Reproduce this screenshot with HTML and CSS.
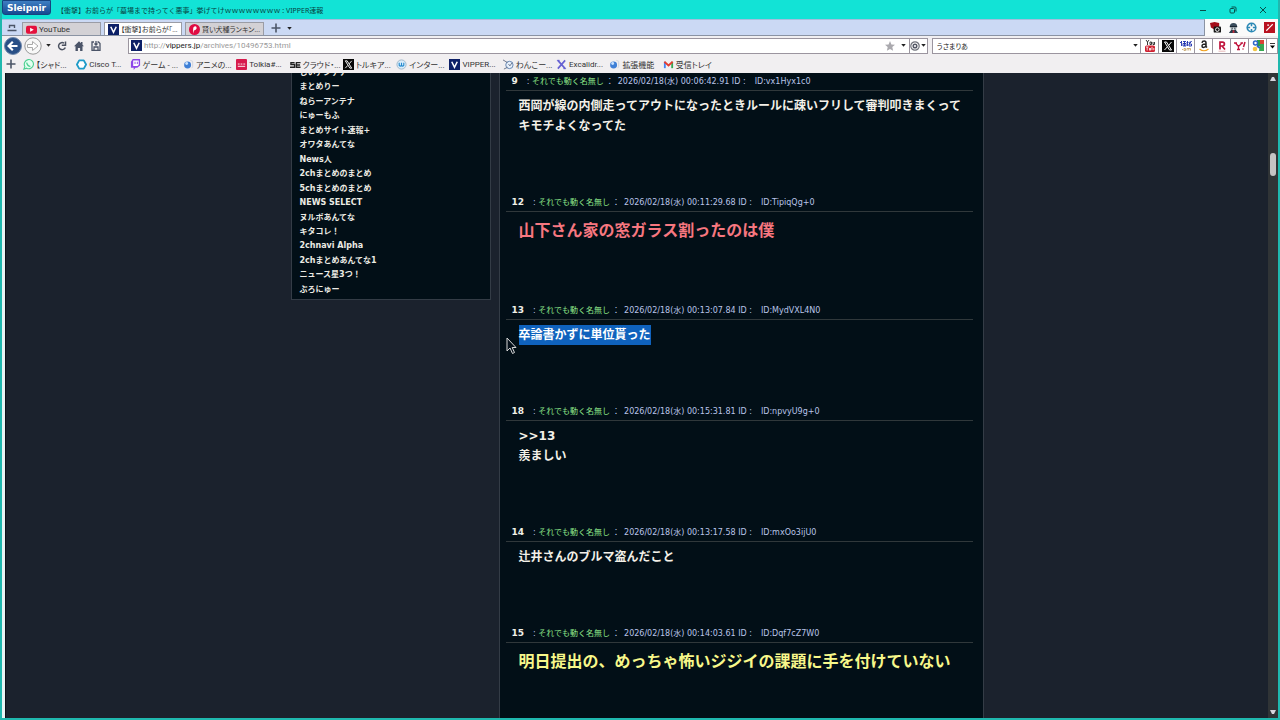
FILE: index.html
```html
<!DOCTYPE html>
<html lang="ja">
<head>
<meta charset="utf-8">
<title>VIPPER速報</title>
<link rel="stylesheet" href="styles.css">
</head>
<body>
<svg width="0" height="0" class="defs" aria-hidden="true">
  <symbol id="v" viewBox="0 0 12 12"><rect width="12" height="12" fill="#0d2067"/><path d="M3 3l3 6 3-6" fill="none" stroke="#fff" stroke-width="1.7"/></symbol>
  <symbol id="x" viewBox="0 0 12 12"><rect width="12" height="12" fill="#080808"/><path d="M2.500 2h2l5 8h-2zM9.500 2L6.800 5.200M5.200 7L2.500 10" fill="none" stroke="#fff" stroke-width="1"/></symbol>
  <symbol id="down" viewBox="0 0 6 4"><path d="M0 0h6L3 3.6z" fill="currentColor"/></symbol>
  <symbol id="globe" viewBox="0 0 12 12"><circle cx="5" cy="6.5" r="3.8" fill="#3f7fd6"/><circle cx="4" cy="5" r="1.6" fill="#c7e2ff"/><path d="M8 1.500l2.500 1v6l-1 1.500" fill="none" stroke="#cfd2da"/></symbol>
  <symbol id="plus" viewBox="0 0 10 10"><path d="M5 .5v9M.5 5h9" stroke="#4b5567" stroke-width="1.600"/></symbol>
</svg>
<div class="window">
  <header class="titlebar">
    <button class="brand">Sleipnir</button>
    <span class="title">【衝撃】お前らが「墓場まで持ってく悪事」挙げてけｗｗｗｗｗｗｗｗ : VIPPER速報</span>
    <div class="winbtns">
      <button aria-label="最小化"><svg viewBox="0 0 8 8"><path d="M1 4.500h6" stroke="#064f4b"/></svg></button>
      <button aria-label="元に戻す"><svg viewBox="0 0 8 8" fill="none" stroke="#064f4b"><rect x="1" y="2.500" width="4.500" height="4.500" rx="1"/><path d="M2.500 1h3.500q1 0 1 1v3.500"/></svg></button>
      <button aria-label="閉じる"><svg viewBox="0 0 8 8"><path d="M1 1l6 6M7 1L1 7" stroke="#064f4b"/></svg></button>
    </div>
  </header>

  <div class="tabrow">
    <div class="tabs">
      <button class="tabmenu" aria-label="タブ一覧"><svg viewBox="0 0 10 10"><path d="M2.500 5V2.500h5V5M.5 7.500h9" fill="none" stroke="#4b5567" stroke-width="1.400"/></svg></button>
      <button class="tab latin"><svg class="ic" viewBox="0 0 12 12"><rect y="2" width="12" height="8.500" rx="2" fill="#e5103c"/><path d="M4.500 4l4 2.200-4 2.300z" fill="#fff"/></svg>YouTube</button>
      <button class="tab active"><svg class="ic"><use href="#v"/></svg>【衝撃】お前らが「...</button>
      <button class="tab"><svg class="ic" viewBox="0 0 12 12"><circle cx="6" cy="6" r="6" fill="#e00b43"/><path d="M4.500 10.500V6C4.500 3.500 5.500 2.500 7 2.500s2.500 4-1.500 4.500z" fill="#fff"/></svg>賢い犬種ランキン...</button>
      <button class="newtab" aria-label="新しいタブ"><svg viewBox="0 0 10 10"><use href="#plus"/></svg></button>
      <button class="tabarrow" aria-label="タブメニュー"><svg><use href="#down"/></svg></button>
    </div>
    <div class="addons">
      <button aria-label="キャプチャ"><svg viewBox="0 0 12 12"><path d="M0 1l5-1 5 1v4L6 9 1 6z" fill="#a50d1a"/><rect x="4" y="5" width="8" height="6.500" rx="1" fill="#161616"/><circle cx="8" cy="8.300" r="2" fill="none" stroke="#fff"/></svg></button>
      <button aria-label="ユーザー"><svg viewBox="0 0 12 12"><path d="M2 5q0-4 4-4t4 4z" fill="#3a4c5c"/><rect x="2.500" y="4.500" width="7" height="4" fill="#cfd8dc"/><path d="M2 5h8M4 7h1M7 7h1" stroke="#182532" stroke-width="1.500"/><path d="M1 12l3-4 2 1 2-1 3 4z" fill="#263b4c"/><path d="M5 9h2v3H5z" fill="#b92a3a"/></svg></button>
      <button aria-label="ツール"><svg viewBox="0 0 12 12" fill="none" stroke="#2b88b5" stroke-width="1.700"><circle cx="6" cy="6" r="4.700"/><path d="M6 1v3.500M6 7.500V11M1 6h3.500M7.500 6H11"/></svg></button>
      <button aria-label="ハイライト"><svg viewBox="0 0 12 12"><rect width="12" height="12" fill="#b81120"/><path d="M2.500 9.500L9.500 2.500M3.500 3.500h2" stroke="#fff" stroke-width="1.300"/></svg></button>
    </div>
  </div>

  <div class="navrow">
    <div class="nav">
      <button class="back" aria-label="戻る"><svg viewBox="0 0 18 18"><circle cx="9" cy="9" r="8.500" fill="#294f86" stroke="#7189ac"/><path d="M13.500 9H5M8.800 4.800L4.600 9l4.200 4.200" fill="none" stroke="#fff" stroke-width="2.200"/></svg></button>
      <button class="back" aria-label="進む"><svg viewBox="0 0 18 18"><circle cx="9" cy="9" r="8.200" fill="#f8f8f8" stroke="#999"/><path d="M3.500 7.500h5V4.500L14 9l-5.500 4.500v-3h-5z" fill="#fff" stroke="#aaa"/></svg></button>
      <button class="small" aria-label="履歴"><svg><use href="#down"/></svg></button>
      <button aria-label="更新"><svg viewBox="0 0 10 10"><path d="M8.300 6.500A3.500 3.500 0 1 1 7 2.200M4.800 4.200h3.700V.5" fill="none" stroke="#4b5160" stroke-width="1.500"/></svg></button>
      <button aria-label="ホーム"><svg viewBox="0 0 10 10"><path d="M5 .3L0 5.200h1.500V10h2.400V7h2.200v3h2.400V5.200H10L8.500 3.700V1H7v1.300z" fill="#4b5468"/></svg></button>
      <button aria-label="保存"><svg viewBox="0 0 10 10" fill="none" stroke="#4b5468" stroke-width="1.300"><path d="M3 1H1v8.300h8V2.500L7.500 1H6.500M3 9V6h4v3M5 0v4M3.500 2.500L5 4l1.500-1.500"/></svg></button>
    </div>
    <div class="address">
      <svg class="ic"><use href="#v"/></svg>
      <a class="url" href="#">http://<b>vippers.jp</b>/archives/10496753.html</a>
      <button aria-label="お気に入り"><svg class="star" viewBox="0 0 10 10"><path d="M5 0l1.400 3.400 3.600.3-2.700 2.400.8 3.700L5 7.900 1.900 9.800l.8-3.700L0 3.700l3.600-.3z" fill="#aaa9ae"/></svg></button>
      <button class="dd" aria-label="候補"><svg><use href="#down"/></svg></button>
      <button class="engine" aria-label="エンジン"><svg class="gear" viewBox="0 0 10 10" fill="none"><circle cx="5" cy="5" r="4.200" stroke="#70737b" stroke-width="1.200"/><circle cx="5" cy="5" r="1.800" stroke="#555966" stroke-width="1.500"/></svg><svg><use href="#down"/></svg></button>
    </div>
    <div class="search">
      <input type="text" value="うさまりあ" aria-label="検索">
      <button class="dd" aria-label="検索履歴"><svg><use href="#down"/></svg></button>
      <button class="site" aria-label="YouTube検索"><svg viewBox="0 0 12 12"><path d="M2 0l1.500 2L5 0M3.500 2v3M6 2h1.500v2.500H6zM9 2v2.500h1.500V2" fill="none" stroke="#222" stroke-width=".9"/><rect x="1" y="5.500" width="10" height="6.500" rx="1.500" fill="#cf2030"/><path d="M2 7h2.500M3.200 7v3.500M5.500 8v2.200h1V8M8 6.800v3.400M9.800 8v2.200" fill="none" stroke="#fff" stroke-width=".8"/></svg></button>
      <button class="site" aria-label="X検索"><svg><use href="#x"/></svg></button>
      <button class="site" aria-label="価格.com検索"><svg viewBox="0 0 12 12"><path d="M1.500 1v5M0 3l2-2M3 1.500h3M3 3.500h3v2.500H3zM4.500 1.500V6M6.500 2.500h2M7.500 1v5M9 2.500l2.500-1L9 4M9 4h2.500v2H9z" fill="none" stroke="#1b2fae" stroke-width=".9"/><path d="M2 9.500h1M4 8.500h1.500v2H4zM7 10.500v-2h3.500v2M8.800 8.500v2" fill="none" stroke="#c5a46c" stroke-width=".9"/></svg></button>
      <button class="site" aria-label="Amazon検索"><svg viewBox="0 0 12 12"><path d="M4 2.800Q4.300 1 6.200 1 8 1 8 3v3.500L9 7.500M8 4Q4 3.800 4 6q0 1.500 1.500 1.500T8 5.500" fill="none" stroke="#222" stroke-width="1.500"/><path d="M1.500 9q4.500 3.500 9 0" fill="none" stroke="#f0a020" stroke-width="1.200"/></svg></button>
      <button class="site" aria-label="楽天検索"><svg viewBox="0 0 12 12"><path d="M4 9.500V2.200h2.500a1.800 1.800 0 0 1 0 3.800H4M6 6l3 3.500" fill="none" stroke="#c0143c" stroke-width="1.700"/><path d="M2.500 11.200h7" stroke="#d99" stroke-width=".7"/></svg></button>
      <button class="site" aria-label="Yahoo検索"><svg viewBox="0 0 12 12"><path d="M0 3h3M1.500 3L4.500 6.500 8 3M6.500 3h2.500M4.500 6v3.500M3 9.500h3" fill="none" stroke="#c0143c" stroke-width="1.300"/><path d="M11 2L9.500 7M9 8.500v1" stroke="#c0143c" stroke-width="1.500"/></svg></button>
      <button class="site" aria-label="Google検索"><svg viewBox="0 0 12 12"><rect x="5" y="0" width="7" height="6" fill="#2b9c48"/><path d="M8 2h4v9H7z" fill="#35a852"/><path d="M8 0h4v4H8z" fill="#d94335"/><circle cx="3.500" cy="3" r="2" fill="#fff" stroke="#2d66c7" stroke-width="1.500"/><circle cx="3" cy="9" r="2.300" fill="#f1c343"/><path d="M5 6l3 2" stroke="#2d66c7" stroke-width="2"/></svg></button>
      <button class="more" aria-label="その他"><svg viewBox="0 0 6 7"><path d="M0 .5h6" stroke="#111"/><path d="M0 3h6L3 6.500z"/></svg></button>
    </div>
  </div>

  <nav class="bookmarks">
    <button class="add" aria-label="追加"><svg viewBox="0 0 10 10"><use href="#plus"/></svg></button>
    <div class="marks">
      <a href="#"><svg class="ic" viewBox="0 0 12 12"><path d="M1 11l1-3a5 5 0 1 1 2 2z" fill="#e3fff1" stroke="#4dcf91" stroke-width="1.200"/><path d="M4 4q1 4 4 4" fill="none" stroke="#4dcf91" stroke-width="1.500"/></svg>【シャド...</a>
      <a href="#"><svg class="ic" viewBox="0 0 12 12"><path d="M3.500 1.500h5l2.500 4.500-2.500 4.500h-5L1 6z" fill="#fff" stroke="#1e9bc8" stroke-width="2" stroke-linejoin="round"/></svg>Cisco T...</a>
      <a href="#"><svg class="ic" viewBox="0 0 12 12"><path d="M3 0h8v7L8 9.500H6L4 12V9.500H1V3z" fill="#8d45e8"/><path d="M3.500 1.500h6v5l-1.500 1h-4.500z" fill="#fff"/><path d="M5.500 3v2.500M8 3v2.500" stroke="#8d45e8"/></svg>ゲーム - ...</a>
      <a href="#"><svg class="ic"><use href="#globe"/></svg>アニメの...</a>
      <a href="#"><svg class="ic" viewBox="0 0 12 12"><rect width="12" height="12" rx="1" fill="#d71b4d"/><path d="M2 5.500h2M5 5.500h2M8 5.500h2M2 8h8" stroke="#fff"/></svg>Tolkia#...</a>
      <a href="#"><svg class="ic" viewBox="0 0 12 12"><path d="M5 4H1v2h4v3H0M11.500 4H7v5h4.500M7 6.500h4" fill="none" stroke="#222" stroke-width="1.500"/></svg>クラウド・...</a>
      <a href="#"><svg class="ic"><use href="#x"/></svg>トルキア...</a>
      <a href="#"><svg class="ic" viewBox="0 0 12 12"><circle cx="6" cy="6" r="5" fill="#d8ecfa" stroke="#9db5c7"/><path d="M3.500 4v3q1.200 1.500 2.500 0V4v3q1.200 1.500 2.500 0V4" fill="none" stroke="#2589cd" stroke-width="1.200"/></svg>インター...</a>
      <a href="#"><svg class="ic"><use href="#v"/></svg>VIPPER...</a>
      <a href="#"><svg class="ic" viewBox="0 0 12 12"><circle cx="7" cy="6.500" r="4" fill="#e7f0fb" stroke="#5c7fae"/><path d="M0 1l5 3M1 11l4-2M6 5.500l1.500 2L10 4" fill="none" stroke="#667085"/></svg>わんこー...</a>
      <a href="#"><svg class="ic" viewBox="0 0 12 12"><path d="M2 1.500l8 9M10 1.500l-8 9" stroke="#6661d2" stroke-width="1.800"/><path d="M1 1.500h3M8 10.500h3" stroke="#6661d2"/></svg>Excalidr...</a>
      <a href="#"><svg class="ic"><use href="#globe"/></svg>拡張機能</a>
      <a href="#"><svg class="ic" viewBox="0 0 12 12" fill="none" stroke-width="2"><path d="M2 10V3" stroke="#4285f4"/><path d="M10 10V3" stroke="#34a853"/><path d="M1.500 3L6 7l4.500-4" stroke="#e33c30"/></svg>受信トレイ</a>
    </div>
  </nav>

  <div class="view">
    <div class="page">
      <aside class="side">
        <ul>
          <li><a href="#">しいアンテナ</a></li><li><a href="#">まとめりー</a></li><li><a href="#">ねらーアンテナ</a></li><li><a href="#">にゅーもふ</a></li><li><a href="#">まとめサイト速報+</a></li><li><a href="#">オワタあんてな</a></li><li><a href="#">News人</a></li><li><a href="#">2chまとめのまとめ</a></li><li><a href="#">5chまとめのまとめ</a></li><li><a href="#">NEWS SELECT</a></li><li><a href="#">ヌルポあんてな</a></li><li><a href="#">キタコレ！</a></li><li><a href="#">2chnavi Alpha</a></li><li><a href="#">2chまとめあんてな1</a></li><li><a href="#">ニュース星3つ！</a></li><li><a href="#">ぶろにゅー</a></li>
        </ul>
      </aside>
      <main class="thread">
        <article><div class="meta"><b>9</b><span>: <i>それでも動く名無し</i></span><span class="c">：</span><span>2026/02/18(水) 00:06:42.91 ID :</span><span>ID:vx1Hyx1c0</span></div><p>西岡が線の内側走ってアウトになったときルールに疎いフリして審判叩きまくって<br>キモチよくなってた</p></article>
        <article><div class="meta"><b>12</b><span>: <i>それでも動く名無し</i></span><span class="c">：</span><span>2026/02/18(水) 00:11:29.68 ID :</span><span>ID:TipiqQg+0</span></div><p class="big pink">山下さん家の窓ガラス割ったのは僕</p></article>
        <article><div class="meta"><b>13</b><span>: <i>それでも動く名無し</i></span><span class="c">：</span><span>2026/02/18(水) 00:13:07.84 ID :</span><span>ID:MydVXL4N0</span></div><p><mark>卒論書かずに単位貰った</mark></p>
          <svg class="cursor" viewBox="0 0 11 18"><path d="M1 1v13l3-3 2.500 5.500 2-1L6.200 10.500H10z" fill="#05101a" stroke="#d8d8d8"/></svg></article>
        <article><div class="meta"><b>18</b><span>: <i>それでも動く名無し</i></span><span class="c">：</span><span>2026/02/18(水) 00:15:31.81 ID :</span><span>ID:npvyU9g+0</span></div><p>&gt;&gt;13<br>羨ましい</p></article>
        <article><div class="meta"><b>14</b><span>: <i>それでも動く名無し</i></span><span class="c">：</span><span>2026/02/18(水) 00:13:17.58 ID :</span><span>ID:mxOo3ijU0</span></div><p>辻井さんのブルマ盗んだこと</p></article>
        <article><div class="meta"><b>15</b><span>: <i>それでも動く名無し</i></span><span class="c">：</span><span>2026/02/18(水) 00:14:03.61 ID :</span><span>ID:Dqf7cZ7W0</span></div><p class="big yellow">明日提出の、めっちゃ怖いジジイの課題に手を付けていない</p></article>
      </main>
    </div>
    <div class="scroll">
      <svg viewBox="0 0 6 4"><path d="M0 4h6L4 0H2z" fill="#d5d5dd"/></svg>
      <div class="track"><div class="thumb"></div></div>
      <svg viewBox="0 0 6 4"><path d="M0 0h6L4 4H2z" fill="#d5d5dd"/></svg>
    </div>
  </div>
</div>
</body>
</html>
```
FILE: styles.css
```css
* { box-sizing: border-box; }
body { margin: 0; background: #1b222d; font-family: Roboto, "Noto Sans CJK JP", sans-serif; font-size: 8px; color: #333; }
.defs { position: absolute; }
button { font: inherit; color: inherit; background: none; border: 0; padding: 0; display: flex; align-items: center; justify-content: center; flex: none; }
a { color: inherit; text-decoration: none; }
svg { width: 10px; height: 10px; display: block; flex: none; }
.ic { width: 11px; height: 11px; }

.window { height: 100vh; display: flex; flex-direction: column; border: 2px solid #1fb8ae; border-width: 0 2px 2px; overflow: hidden; }
.titlebar { height: 19px; flex: none; background: #12e3d6; display: flex; align-items: center; color: #07423f; }
.brand { align-self: flex-start; height: 15px; width: 49px; background: linear-gradient(#3f7ec2, #164a92); border: 1px solid #16437f; border-radius: 0 0 3px 3px; color: #fff; font: bold 9px "DejaVu Sans", sans-serif; }
.title { margin-left: 6px; flex: 1; white-space: nowrap; font-family: "Noto Sans", "Noto Sans CJK JP", sans-serif; font-size: 7px; }
.winbtns { display: flex; }
.winbtns button { width: 30px; }
.winbtns svg { width: 8px; height: 8px; }

.tabrow { height: 17px; flex: none; display: flex; background: #fafafa; }
.tabs { flex: 1; display: flex; align-items: flex-end; background: #cbd9f4; border-right: 1px solid #8a93a3; border-bottom: 1px solid #8a93a3; border-top: 1px solid #a4bedd; }
.tabmenu { width: 20px; height: 14px; }
.tab { width: 79px; height: 13px; margin-right: 3px; padding: 0 0 0 3px; gap: 2px; justify-content: flex-start; background: #d3d1d5; border: 1px solid #9a9ca5; border-bottom: 0; white-space: nowrap; font-size: 7px; font-feature-settings: "palt"; }
.tab.latin { font-size: 8px; }
.tab.active { background: #fff; width: 78px; }
.newtab { width: 17px; height: 14px; }
.tabarrow { width: 10px; height: 14px; }
.tabarrow svg, .small svg, .dd svg, .engine svg:last-child { width: 5px; height: 3px; color: #222; }
.addons { width: 73px; display: flex; align-items: center; justify-content: space-between; padding: 0 3px 0 5px; }
.addons svg { width: 11px; height: 11px; }

.navrow { height: 19px; flex: none; display: flex; align-items: center; background: #f1eff1; padding-left: 1px; }
.nav { display: flex; align-items: center; width: 125px; flex: none; }
.nav button { width: 17px; }
.nav .back { width: 20px; }
.back svg { width: 18px; height: 18px; }
.nav .small { width: 10px; }
.address, .search { display: flex; align-items: center; height: 16px; background: #fff; border: 1px solid #9b959f; min-width: 0; }
.address { flex: 800; padding-left: 2px; gap: 1px; }
.url { flex: 1; color: #999; white-space: nowrap; padding-left: 1px; }
.url b { font-weight: normal; color: #222; }
.address .dd { width: 12px; justify-content: flex-end; padding-right: 2px; }
.engine { border-left: 1px solid #9b959f; height: 14px; width: 18px; gap: 1px; }
.search { flex: 346; margin-left: 4px; }
.search input { flex: 1; min-width: 0; border: 0; outline: 0; padding: 0 4px; font: inherit; font-size: 7px; color: #222; background: none; height: 14px; font-feature-settings: "palt"; }
.search .dd { width: 10px; }
.site { width: 18px; height: 14px; border-left: 1px solid #9b959f; }
.site svg { width: 12px; height: 12px; }
.more { width: 11px; height: 14px; border-left: 1px solid #9b959f; }
.more svg { width: 5px; height: 6px; }

.bookmarks { height: 18px; flex: none; display: flex; align-items: center; background: #f1eff1; }
.add { width: 17px; margin-right: 4px; }
.marks { display: grid; grid-template-columns: repeat(13, 1fr); width: 693px; font-feature-settings: "palt"; }
.marks a { display: flex; align-items: center; gap: 2px; white-space: nowrap; }

.view { flex: 1; min-height: 0; display: flex; border-left: 3px solid #e8f4f4; overflow: hidden; }
.page { flex: 1; display: flex; justify-content: center; align-items: flex-start; gap: 8px; overflow: hidden; border-left: 1px solid #0b0f16; font-family: "DejaVu Sans", "Noto Sans CJK JP", sans-serif; }
.side { width: 200px; background: #020f17; border: 1px solid #343c46; border-top: 0; }
.side ul { list-style: none; margin: -7px 0 0; padding: 0 8px 2px; height: 233px; display: flex; flex-direction: column; justify-content: space-between; line-height: 14px; font-weight: bold; color: #ecebe4; }
.thread { width: 485px; padding: 0 10px 0 6px; background: #020f17; border: 1px solid #343c46; border-width: 0 1px; }
article { position: relative; }
.meta { display: flex; padding-left: 6px; line-height: 17px; border-bottom: 1px solid #30383b; color: #b9c4e8; white-space: nowrap; }
.meta b { font-size: 9px; color: #f0f0e8; margin-right: 9px; }
.meta i { font-style: normal; color: #8ee68a; }
.meta .c { width: 8px; margin: 0 4px 0 2px; }
.meta span:last-child { margin-left: 9px; }
p { margin: 0; padding: 5px 0 58px 13px; font-size: 12px; line-height: 20px; font-weight: bold; color: #f3f0e8; white-space: nowrap; }
.big { font-size: 16px; line-height: 27px; }
.pink { color: #f77780; }
.yellow { color: #f8f88a; }
mark { display: inline-block; background: #0f62bd; color: #fff; }
.cursor { position: absolute; left: 0; top: 35px; width: 11px; height: 18px; }
.scroll { width: 10px; flex: none; background: #303436; display: flex; flex-direction: column; align-items: center; padding: 4px 0; }
.scroll svg { width: 6px; height: 4px; }
.track { flex: 1; padding-top: 72px; }
.thumb { width: 6px; height: 23px; border-radius: 3px; background: #c5c3c3; }
```
